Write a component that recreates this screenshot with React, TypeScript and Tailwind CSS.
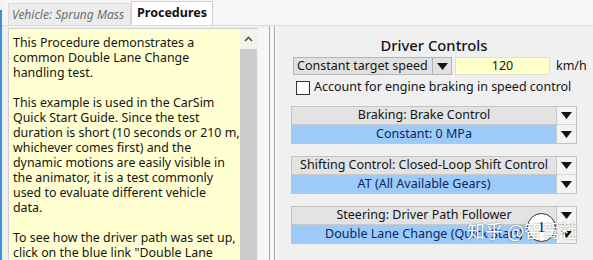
const leftLines = [
  "This Procedure demonstrates a",
  "common Double Lane Change",
  "handling test.",
  "",
  "This example is used in the CarSim",
  "Quick Start Guide. Since the test",
  "duration is short (10 seconds or 210 m,",
  "whichever comes first) and the",
  "dynamic motions are easily visible in",
  "the animator, it is a test commonly",
  "used to evaluate different vehicle",
  "data.",
  "",
  "To see how the driver path was set up,",
  'click on the blue link "Double Lane',
];

const groups = [
  { title: "Braking: Brake Control", value: "Constant: 0 MPa" },
  { title: "Shifting Control: Closed-Loop Shift Control", value: "AT (All Available Gears)" },
  { title: "Steering: Driver Path Follower", value: "Double Lane Change (Quick Start)" },
];

const Arrow = () => (
  <svg width="11" height="7" viewBox="0 0 11 7">
    <polygon points="0,0 11,0 5.5,7" fill="#111" />
  </svg>
);

const Group = ({ title, value }: { title: string; value: string }) => (
  <div className="flex w-[286px] border border-[#c4c4c4] bg-[#f3f3f3]">
    <div className="flex-1 flex flex-col">
      <div className="h-[18px] bg-[#e3e3e3] border-b border-[#c9c9c9] flex items-center justify-center text-[12.5px] text-[#141414] whitespace-nowrap">
        {title}
      </div>
      <div className="h-[18px] bg-[#9ccbfa] flex items-center justify-center text-[12.5px] text-[#10245e] whitespace-nowrap overflow-hidden">
        {value}
      </div>
    </div>
    <div className="w-[20px] flex flex-col border-l border-[#c9c9c9]">
      <div className="h-[18px] flex items-center justify-center border-b border-[#d4d4d4]">
        <Arrow />
      </div>
      <div className="h-[18px] flex items-center justify-center">
        <Arrow />
      </div>
    </div>
  </div>
);

export default function App() {
  return (
    <div
      className="relative w-[593px] h-[260px] overflow-hidden bg-[#f3f3f3] flex"
      style={{ fontFamily: '"Noto Sans", "Open Sans", sans-serif' }}
    >
      <div className="w-[2px] mt-[10px] bg-[#3d8fd6]" />
      <div className="flex-1 flex flex-col">
        {/* tabs */}
        <div className="h-[26px] flex items-end border-b border-[#dedede] bg-[#f6f6f6]">
          <div className="ml-[6px] h-[22px] w-[123px] flex items-center pl-[3px] bg-[#ececec] border border-b-0 border-[#dadada] text-[12px] italic text-[#6e6e6e] whitespace-nowrap">
            Vehicle: Sprung Mass
          </div>
          <div className="h-[24px] w-[82px] flex items-center justify-center bg-white border border-b-0 border-[#d0d0d0] text-[12.5px] font-bold text-[#111]">
            Procedures
          </div>
        </div>
        <div className="flex-1 flex">
          {/* left panel */}
          <div className="w-[266px] flex pl-[6px] pt-[2px] bg-[#f0f0f0]">
            <div className="w-[250px] flex border-l border-t border-[#cfcfcf]">
              <div className="w-[231px] bg-[#ffffd2] pl-[4px] pt-[6px] text-[12.4px] leading-[15px] text-[#151515]">
                {leftLines.map((l, i) => (
                  <div key={i} className="h-[15px] whitespace-nowrap">
                    {l}
                  </div>
                ))}
              </div>
              <div className="w-[17px] flex flex-col bg-[#f3f3ea]">
                <div className="h-[20px] flex items-center justify-center">
                  <svg width="9" height="6" viewBox="0 0 9 6">
                    <polyline points="1,5 4.5,1.5 8,5" fill="none" stroke="#555" strokeWidth="1.6" />
                  </svg>
                </div>
                <div className="flex-1 bg-[#cdcdcd]" />
              </div>
            </div>
            <div className="flex-1 bg-[#f6f6f6]" />
          </div>
          {/* splitter */}
          <div className="w-[9px] flex bg-[#f7f7f7]">
            <div className="w-[1px] ml-[1px] bg-[#a8a8a8]" />
            <div className="w-[1px] ml-[4px] bg-[#a8a8a8]" />
          </div>
          {/* right panel */}
          <div className="flex-1 flex flex-col bg-[#f0f0f0] pl-[14px] text-[#141414]">
            <div className="mt-[9px] h-[20px] w-[286px] flex items-center justify-center text-[14.8px] font-medium">
              Driver Controls
            </div>
            <div className="mt-[2px] ml-[2px] flex items-center h-[18px]">
              <div className="w-[159px] h-[18px] flex border border-[#b4b4b4] bg-[#e1e1e1]">
                <div className="flex-1 flex items-center pl-[3px] text-[12.5px] whitespace-nowrap">
                  Constant target speed
                </div>
                <div className="w-[19px] flex items-center justify-center border-l border-[#b4b4b4]">
                  <Arrow />
                </div>
              </div>
              <div className="ml-[3px] w-[95px] h-[18px] bg-[#ffffcc] border border-[#dedede] flex items-center justify-center text-[12.5px]">
                120
              </div>
              <div className="ml-[6px] text-[12.5px]">km/h</div>
            </div>
            <div className="mt-[5px] ml-[5px] flex items-center h-[15px]">
              <div className="w-[14px] h-[14px] bg-white border border-[#333]" />
              <div className="ml-[4px] text-[12.5px] whitespace-nowrap">
                Account for engine braking in speed control
              </div>
            </div>
            <div className="mt-[11px] flex flex-col gap-[12px]">
              {groups.map((g) => (
                <Group key={g.title} title={g.title} value={g.value} />
              ))}
            </div>
          </div>
        </div>
      </div>

      {/* watermark */}
      <div className="absolute left-[527px] top-[213px] w-[29px] h-[29px] rounded-full bg-white border border-[#333] flex items-center justify-center text-[15px] text-[#111]" style={{ fontFamily: '"Liberation Serif", serif' }}>
        1
      </div>
      <div
        className="absolute left-[467px] top-[217px] text-[18px] text-white whitespace-nowrap [text-shadow:0_0_2px_rgba(0,0,0,0.45)]"
        style={{ fontFamily: '"Noto Sans CJK SC", sans-serif' }}
      >
        知乎 @智驾社
      </div>
    </div>
  );
}
